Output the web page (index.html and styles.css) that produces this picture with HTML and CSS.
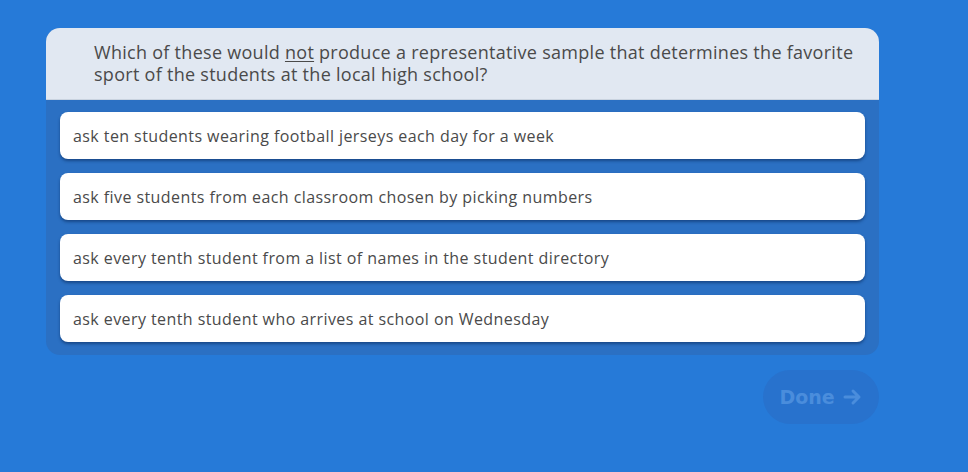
FILE: index.html
```html
<!DOCTYPE html>
<html>
<head>
<meta charset="utf-8">
<link rel="stylesheet" href="styles.css">
</head>
<body>
<div class="page">
  <div class="card">
    <div class="question">
      <p>Which of these would <span class="ul">not</span> produce a representative sample that determines the favorite sport of the students at the local high school?</p>
    </div>
    <div class="options">
      <div class="option">ask ten students wearing football jerseys each day for a week</div>
      <div class="option">ask five students from each classroom chosen by picking numbers</div>
      <div class="option">ask every tenth student from a list of names in the student directory</div>
      <div class="option">ask every tenth student who arrives at school on Wednesday</div>
    </div>
  </div>
  <div class="actions">
    <button class="done">Done <svg width="20" height="18" viewBox="0 0 20 18"><path d="M2 9h14M10 3l6 6-6 6" fill="none" stroke="currentColor" stroke-width="3" stroke-linecap="round" stroke-linejoin="round"/></svg></button>
  </div>
</div>
</body>
</html>
```
FILE: styles.css
```css
html, body {
  margin: 0;
  padding: 0;
  background: #267ad8;
  width: 968px;
  height: 472px;
  overflow: hidden;
}
.page {
  padding: 28px 89px 0 46px;
  font-family: "Open Sans", sans-serif;
}
.card {
  width: 833px;
  border-radius: 14px;
  overflow: hidden;
  background: #2b70c3;
}
.question {
  background: #e1e8f2;
  padding: 13px 0 14px 48px;
  border-bottom: 1px solid #c9d3e0;
}
.question p {
  margin: 0;
  max-width: 775px;
  font-size: 18px;
  line-height: 22px;
  color: #4a4a4a;
  letter-spacing: 0.28px;
}
.ul {
  text-decoration: underline;
  text-underline-offset: 2px;
}
.options {
  display: flex;
  flex-direction: column;
  gap: 14px;
  padding: 12px 14px 13px 14px;
}
.option {
  background: #ffffff;
  border-radius: 8px;
  height: 47px;
  box-sizing: border-box;
  padding: 0 13px;
  display: flex;
  align-items: center;
  font-size: 16px;
  color: #4a4a4a;
  letter-spacing: 0.42px;
  box-shadow: 0 2px 3px rgba(10, 40, 90, 0.55);
}
.actions {
  display: flex;
  justify-content: flex-end;
  width: 833px;
  margin-top: 15px;
}
.done {
  width: 116px;
  height: 54px;
  border: none;
  border-radius: 27px;
  background: #2872cd;
  color: #4a8ddc;
  font-family: "DejaVu Sans", sans-serif;
  font-weight: bold;
  font-size: 19px;
  display: flex;
  align-items: center;
  justify-content: center;
  gap: 8px;
  padding: 0;
}
```
